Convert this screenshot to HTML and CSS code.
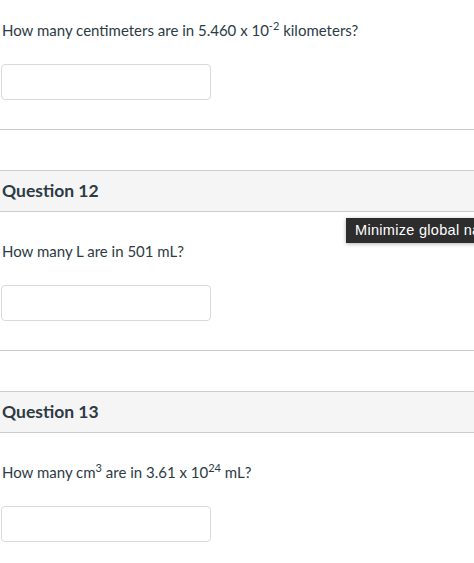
FILE: index.html
```html
<!DOCTYPE html>
<html lang="en">
<head>
<meta charset="utf-8">
<title>Quiz</title>
<link rel="stylesheet" href="styles.css">
</head>
<body>
<main class="quiz">
  <div class="question first">
    <p class="q-text">How many centimeters are in 5.460 x 10<sup>-2</sup> kilometers?</p>
    <input class="answer" type="text" aria-label="Answer">
  </div>
  <hr class="divider">

  <section class="question">
    <div class="q-header"><h2 class="q-title">Question 12</h2></div>
    <p class="q-text">How many L are in 501 mL?</p>
    <input class="answer" type="text" aria-label="Answer">
  </section>
  <hr class="divider">

  <section class="question">
    <div class="q-header"><h2 class="q-title">Question 13</h2></div>
    <p class="q-text">How many cm<sup>3</sup> are in 3.61 x 10<sup>24</sup> mL?</p>
    <input class="answer" type="text" aria-label="Answer">
  </section>
</main>
<div class="tooltip" role="tooltip">Minimize global navigation</div>
</body>
</html>
```

FILE: styles.css
```css
html, body {
  margin: 0;
  padding: 0;
  background: #ffffff;
  overflow: hidden;
}

body {
  font-family: "Lato", "Liberation Sans", sans-serif;
  color: #2d3b45;
  width: 474px;
  height: 563px;
  position: relative;
}

.quiz {
  display: flex;
  flex-direction: column;
  padding-top: 18px;
}

.question {
  display: flex;
  flex-direction: column;
}

.q-header {
  box-sizing: border-box;
  height: 42px;
  margin-top: 40px;
  background: #f5f5f5;
  border-top: 1px solid #c7cdd1;
  border-bottom: 1px solid #c7cdd1;
  padding-left: 2px;
}

.q-title {
  margin: 0;
  font-size: 17.5px;
  line-height: 40px;
  font-weight: 700;
  color: #2d3b45;
}

.q-text {
  margin: 0;
  padding-left: 2px;
  font-size: 15px;
  line-height: 24px;
}

.q-header + .q-text {
  margin-top: 27px;
}

.q-text sup {
  font-size: 11px;
  line-height: 0;
  vertical-align: 6px;
}

.answer {
  box-sizing: border-box;
  width: 210px;
  height: 36px;
  margin: 22px 0 0 1px;
  padding: 0 8px;
  border: 1px solid #d7dbde;
  border-radius: 4px;
  background: #ffffff;
  font-family: inherit;
  font-size: 15px;
  outline: none;
}

.divider {
  margin: 29px 0 0 0;
  border: 0;
  border-top: 1px solid #c7cdd1;
  height: 0;
}

.tooltip {
  position: absolute;
  left: 346px;
  top: 218px;
  height: 25px;
  box-sizing: border-box;
  padding: 0 9px;
  background: #2d2d2d;
  color: #ffffff;
  font-family: "Liberation Sans", "DejaVu Sans", sans-serif;
  font-size: 14.5px;
  letter-spacing: 0.3px;
  line-height: 25px;
  white-space: nowrap;
  box-shadow: 0 1px 4px rgba(0, 0, 0, 0.3);
}
```
